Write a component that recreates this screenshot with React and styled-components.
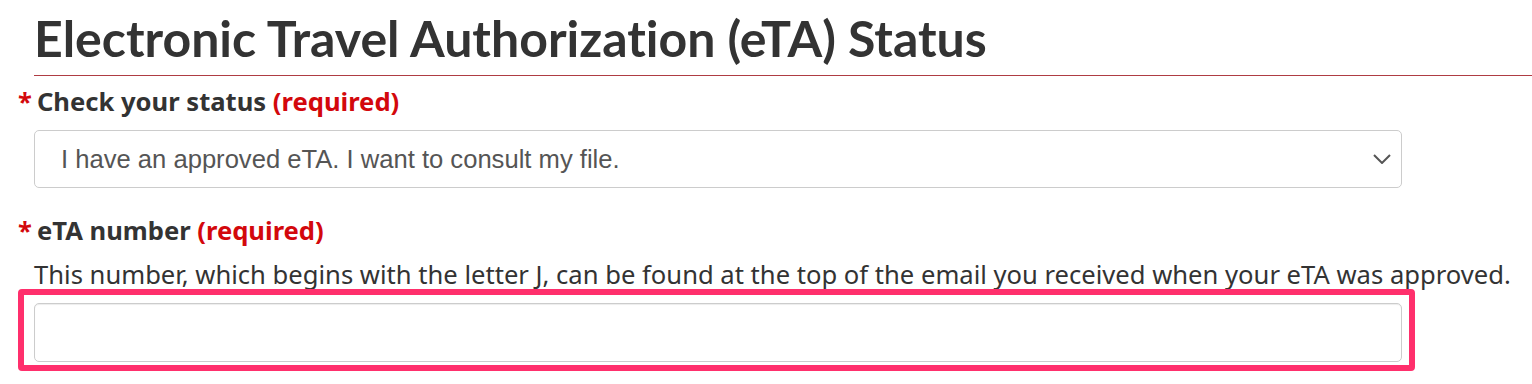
import React from "react";
import styled, { createGlobalStyle } from "styled-components";

const Global = createGlobalStyle`
  html, body { margin: 0; padding: 0; background: #fff; }
  body { font-family: "Noto Sans", "Open Sans", sans-serif; color: #333; }
  * { box-sizing: border-box; }
`;

const Page = styled.div`
  width: 1532px;
  padding: 10px 0 0 18px;
`;

const Title = styled.h1`
  margin: 0 0 0 16px;
  padding-bottom: 9px;
  font-family: Lato, "Noto Sans", sans-serif;
  font-weight: 700;
  font-size: 50px;
  line-height: 56px;
  font-variant-ligatures: none;
  color: #333;
  border-bottom: 1px solid #af3c43;
`;

const Field = styled.div`
  display: flex;
  flex-direction: column;
  margin-top: ${(p) => p.$top || 0}px;
`;

const Label = styled.label`
  font-family: "Noto Sans", sans-serif;
  font-weight: 700;
  font-size: 25.6px;
  line-height: 34px;
  color: #333;
`;

const Star = styled.span`
  color: #d3080c;
  margin-right: 5px;
`;

const Required = styled.strong`
  color: #d3080c;
  font-weight: 700;
`;

const Help = styled.p`
  margin: 13px 0 0 16px;
  font-family: "Noto Sans", sans-serif;
  font-size: 25.6px;
  line-height: 28px;
  color: #333;
`;

const SelectBox = styled.div`
  margin: 11px 0 0 16px;
  width: 1368px;
  height: 58px;
  border: 1px solid #ccc;
  border-radius: 5px;
  display: flex;
  align-items: center;
  padding: 0 26px;
  font-family: "Liberation Sans", Arial, sans-serif;
  font-size: 25.6px;
  color: #555;
`;

const Chevron = styled.svg`
  margin-left: auto;
  margin-right: -16px;
  width: 18px;
  height: 10px;
`;

const Highlight = styled.div`
  width: 1397px;
  border: 6px solid #ff2f6c;
  border-radius: 4px;
  padding: 8px 7px 3px 10px;
`;

const TextInput = styled.input`
  display: block;
  width: 1368px;
  height: 59px;
  border: 1px solid #ccc;
  border-radius: 5px;
  box-shadow: inset 0 1px 1px rgba(0, 0, 0, 0.075);
  font-size: 25.6px;
  padding: 0 12px;
  outline: none;
`;

export default function App() {
  return (
    <>
      <Global />
      <Page>
        <Title>Electronic Travel Authorization (eTA) Status</Title>
        <Field $top={9}>
          <Label>
            <Star>*</Star>Check your status <Required>(required)</Required>
          </Label>
          <SelectBox>
            I have an approved eTA. I want to consult my file.
            <Chevron viewBox="0 0 18 10">
              <path d="M1 1 L9 9 L17 1" fill="none" stroke="#555" strokeWidth="2" />
            </Chevron>
          </SelectBox>
        </Field>
        <Field $top={26}>
          <Label>
            <Star>*</Star>eTA number <Required>(required)</Required>
          </Label>
          <Help>
            This number, which begins with the letter J, can be found at the top of the email you received when your eTA was approved.
          </Help>
          <Highlight>
            <TextInput type="text" />
          </Highlight>
        </Field>
      </Page>
    </>
  );
}
